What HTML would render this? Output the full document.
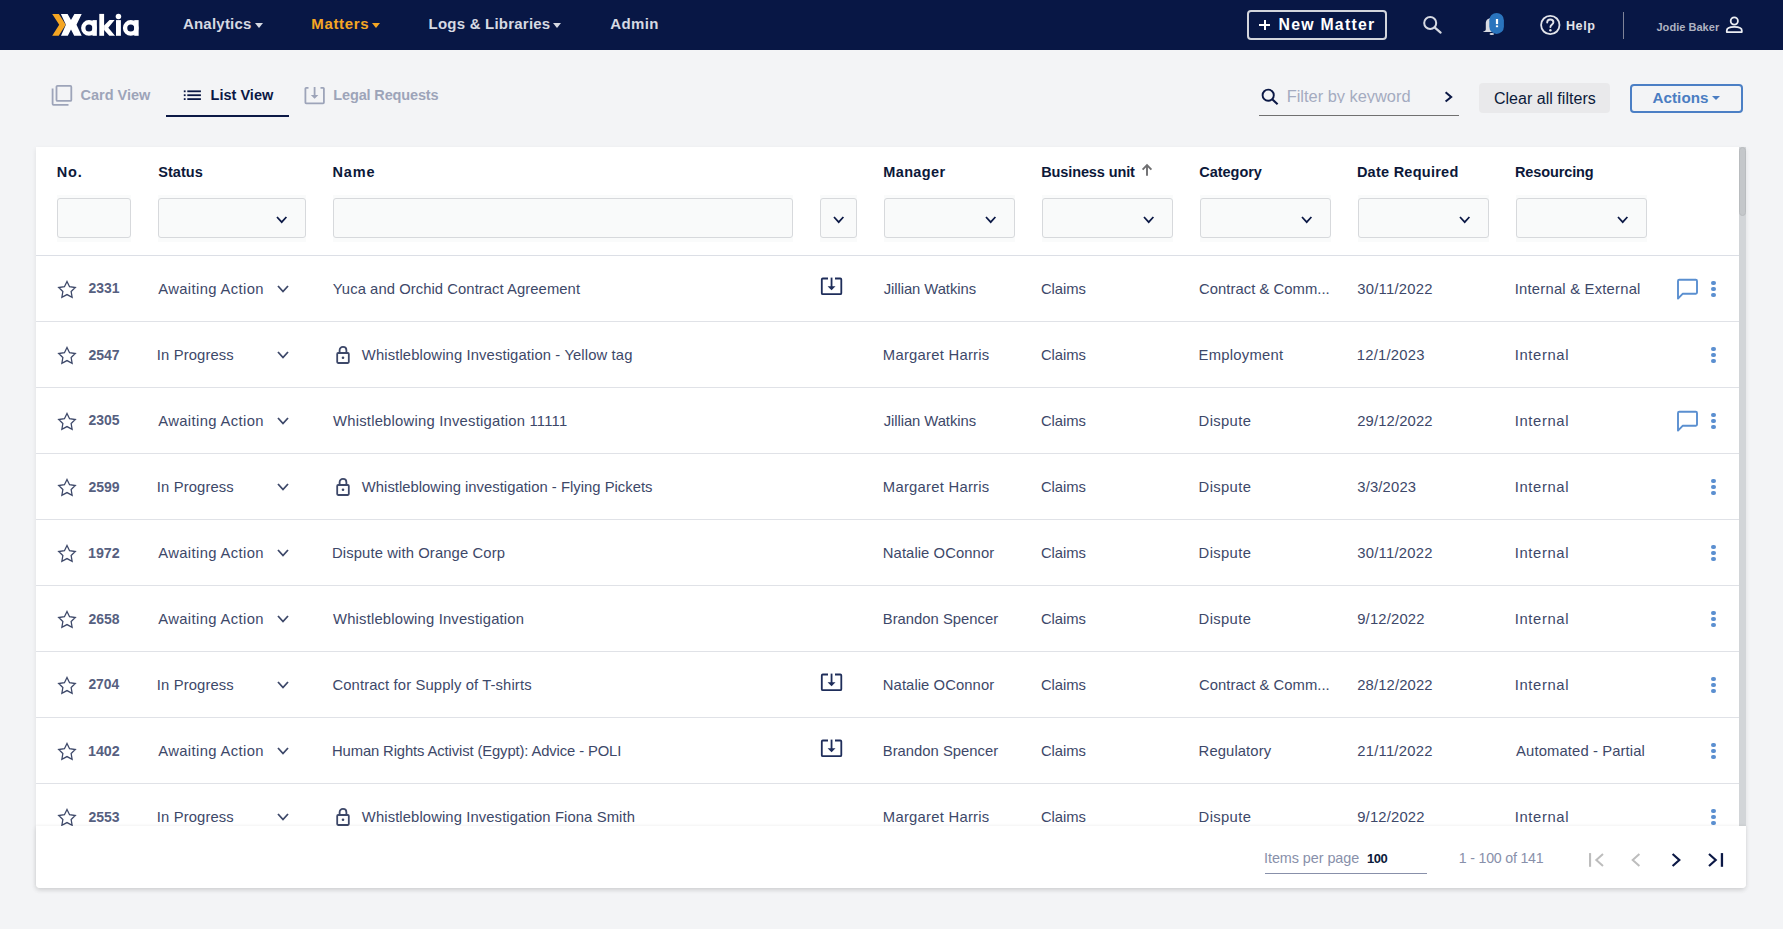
<!DOCTYPE html>
<html><head><meta charset="utf-8"><style>
*{margin:0;padding:0;box-sizing:content-box}
html,body{width:1783px;height:929px;overflow:hidden;background:#f3f4f6;font-family:"Liberation Sans",sans-serif}
body{position:relative}
.t{position:absolute;white-space:nowrap}
#nav{position:absolute;left:0;top:0;width:1783px;height:50px;background:#081745}
#card{position:absolute;left:36px;top:147px;width:1710px;height:741px;background:#fff;border-radius:0 0 4px 4px;box-shadow:0 2px 5px rgba(0,0,0,0.09)}
#rows{position:absolute;left:0;top:256px;width:1739px;height:570px;overflow:hidden}
#rows .t{}
.inp{position:absolute;border:1px solid #d7d9dc;border-radius:3px;background:#f9fafa}
#foot{position:absolute;left:36px;top:826px;width:1710px;height:62px;background:#fff;border-radius:0 0 4px 4px;box-shadow:0 -1px 3px rgba(0,0,0,0.04), -1px 2px 5px rgba(0,0,0,0.07)}
</style></head><body>
<div id="nav"></div>
<svg style="position:absolute;left:0;top:0" width="150" height="50" viewBox="0 0 150 50">
<polygon points="52.2,13.9 58.9,13.9 65.7,24.85 58.7,35.8 52.2,35.8 59.2,24.85" fill="#f5a623"/>
<polygon points="60.9,13.9 67.6,13.9 71,20.1 74.4,13.9 81.7,13.9 76.5,24.85 81.7,35.8 74.2,35.8 71,29.6 67.8,35.8 61,35.8 65.9,24.85" fill="#fff"/>
<path fill="#fff" fill-rule="evenodd" d="M88.95 20.1 A7.85 7.85 0 1 0 88.95 35.8 A7.85 7.85 0 1 0 88.95 20.1 Z M88.95 24.45 A3.5 3.5 0 1 1 88.95 31.45 A3.5 3.5 0 1 1 88.95 24.45 Z"/>
<rect x="92.4" y="20.1" width="4.45" height="15.7" fill="#fff"/>
<rect x="99.3" y="13.9" width="4.8" height="21.9" fill="#fff"/>
<polygon points="104.1,25.6 109.5,20.1 114.6,20.1 108.3,27.7 115,35.8 109.3,35.8 104.1,29.9" fill="#fff"/>
<rect x="116" y="20.1" width="4.9" height="15.7" fill="#fff"/>
<circle cx="118.45" cy="16.6" r="2.75" fill="#fff"/>
<path fill="#fff" fill-rule="evenodd" d="M130.75 20.1 A7.85 7.85 0 1 0 130.75 35.8 A7.85 7.85 0 1 0 130.75 20.1 Z M130.75 24.45 A3.5 3.5 0 1 1 130.75 31.45 A3.5 3.5 0 1 1 130.75 24.45 Z"/>
<rect x="134.2" y="20.1" width="4.45" height="15.7" fill="#fff"/>
</svg>
<div class="t" style="left:182.95000000000002px;top:16.20px;font-size:15px;line-height:15px;font-weight:700;color:#d6d9e2;letter-spacing:0.219px;">Analytics</div>
<div style="position:absolute;left:255.4px;top:23px;width:0;height:0;border-left:4.25px solid transparent;border-right:4.25px solid transparent;border-top:5px solid #d6d9e2"></div>
<div class="t" style="left:311.34999999999997px;top:16.20px;font-size:15px;line-height:15px;font-weight:700;color:#f5a623;letter-spacing:0.633px;">Matters</div>
<div style="position:absolute;left:372px;top:23px;width:0;height:0;border-left:4.25px solid transparent;border-right:4.25px solid transparent;border-top:5px solid #f5a623"></div>
<div class="t" style="left:428.55px;top:16.20px;font-size:15px;line-height:15px;font-weight:700;color:#d6d9e2;letter-spacing:0.22px;">Logs &amp; Libraries</div>
<div style="position:absolute;left:553.3px;top:23px;width:0;height:0;border-left:4.25px solid transparent;border-right:4.25px solid transparent;border-top:5px solid #d6d9e2"></div>
<div class="t" style="left:610.3499999999999px;top:16.20px;font-size:15px;line-height:15px;font-weight:700;color:#d6d9e2;letter-spacing:0.375px;">Admin</div>
<div style="position:absolute;left:1247px;top:10px;width:136px;height:26px;border:2px solid #d3d5dc;border-radius:4px"></div>
<div style="position:absolute;left:1259px;top:23.8px;width:11px;height:2px;background:#fff"></div>
<div style="position:absolute;left:1263.5px;top:19.5px;width:2px;height:10.5px;background:#fff"></div>
<div class="t" style="left:1278.594px;top:16.73px;font-size:15.8px;line-height:15.8px;font-weight:700;color:#ffffff;letter-spacing:1.25px;">New Matter</div>
<svg style="position:absolute;left:1420px;top:14px" width="24" height="22" viewBox="0 0 24 22">
<circle cx="10.2" cy="9" r="6" fill="none" stroke="#d6d9e2" stroke-width="2"/>
<line x1="14.6" y1="13.4" x2="20.6" y2="18.6" stroke="#d6d9e2" stroke-width="2.2" stroke-linecap="round"/></svg>
<svg style="position:absolute;left:1478px;top:10px" width="30" height="28" viewBox="0 0 30 28">
<path d="M13.5 7.9 C9.8 7.9 7.8 10.2 7.8 13.2 L7.8 19.2 C7.8 20.6 6.6 21.1 5.3 21.6 L5.3 22.1 L14 22.1 Z" fill="#d9dbe2"/>
<ellipse cx="13.8" cy="24.1" rx="2.3" ry="1" fill="#d9dbe2"/>
<rect x="11.3" y="2.9" width="14.6" height="21.1" rx="7.3" fill="#2a74bd"/>
<rect x="17.9" y="9" width="2.2" height="5.1" fill="#fff"/>
<rect x="17.9" y="15.4" width="2.2" height="1.8" fill="#fff"/>
</svg>
<svg style="position:absolute;left:1538px;top:13px" width="24" height="24" viewBox="0 0 24 24">
<circle cx="12.3" cy="12" r="9.2" fill="none" stroke="#e2e4ea" stroke-width="1.8"/>
<path d="M9.2 9.6 C9.2 7.6 10.6 6.5 12.3 6.5 C14 6.5 15.4 7.6 15.4 9.3 C15.4 11.4 12.5 11.5 12.4 14" fill="none" stroke="#e2e4ea" stroke-width="1.9" stroke-linecap="round"/>
<circle cx="12.4" cy="17.2" r="1.2" fill="#e2e4ea"/></svg>
<div class="t" style="left:1565.918px;top:19.53px;font-size:12.6px;line-height:12.6px;font-weight:700;color:#e2e4ea;letter-spacing:0.623px;">Help</div>
<div style="position:absolute;left:1623px;top:12px;width:1px;height:27px;background:#7e8398"></div>
<div class="t" style="left:1656.48px;top:21.89px;font-size:11px;line-height:11px;font-weight:700;color:#aeb2c0;letter-spacing:0.037px;">Jodie Baker</div>
<svg style="position:absolute;left:1724px;top:15px" width="20" height="20" viewBox="0 0 20 20">
<circle cx="10.3" cy="6" r="3.6" fill="none" stroke="#eceef3" stroke-width="1.8"/>
<path d="M2.8 17.1 L2.8 15.5 C2.8 13.2 5 11.9 10.3 11.9 C15.6 11.9 17.8 13.2 17.8 15.5 L17.8 17.1 Z" fill="none" stroke="#eceef3" stroke-width="1.8" stroke-linejoin="round"/></svg>
<svg style="position:absolute;left:50px;top:83px" width="26" height="24" viewBox="0 0 26 24">
<path d="M2.6 5.5 L2.6 20.9 Q2.6 21.8 3.5 21.8 L18.5 21.8" fill="none" stroke="#9da4b9" stroke-width="1.8"/>
<rect x="6.5" y="2.9" width="14.8" height="15" rx="1" fill="none" stroke="#9da4b9" stroke-width="1.8"/></svg>
<div class="t" style="left:80.62px;top:87.93px;font-size:14.5px;line-height:14.5px;font-weight:700;color:#9da4b9;letter-spacing:-0.014px;">Card View</div>
<svg style="position:absolute;left:182px;top:88px" width="22" height="14" viewBox="0 0 22 14">
<rect x="1.8" y="2.4" width="1.8" height="1.8" fill="#0b1845"/><rect x="5.3" y="2.4" width="13.6" height="1.8" fill="#0b1845"/>
<rect x="1.8" y="6.3" width="1.8" height="1.8" fill="#0b1845"/><rect x="5.3" y="6.3" width="13.6" height="1.8" fill="#0b1845"/>
<rect x="1.8" y="10.2" width="1.8" height="1.8" fill="#0b1845"/><rect x="5.3" y="10.2" width="13.6" height="1.8" fill="#0b1845"/></svg>
<div class="t" style="left:210.585px;top:87.93px;font-size:14.5px;line-height:14.5px;font-weight:700;color:#0b1845;letter-spacing:0.009px;">List View</div>
<div style="position:absolute;left:166px;top:114.5px;width:123px;height:2.6px;background:#0b1845"></div>
<svg style="position:absolute;left:303px;top:85px" width="24" height="21" viewBox="0 0 24 21">
<path d="M5.5 2.8 L3.2 2.8 Q2.4 2.8 2.4 3.6 L2.4 17.5 Q2.4 18.3 3.2 18.3 L20.1 18.3 Q20.9 18.3 20.9 17.5 L20.9 3.6 Q20.9 2.8 20.1 2.8 L17.5 2.8" fill="none" stroke="#9da4b9" stroke-width="1.8"/>
<line x1="11.6" y1="2" x2="11.6" y2="11" stroke="#9da4b9" stroke-width="1.8"/>
<polygon points="7.8,10 15.4,10 11.6,13.8" fill="#9da4b9"/></svg>
<div class="t" style="left:333.285px;top:87.93px;font-size:14.5px;line-height:14.5px;font-weight:700;color:#9da4b9;letter-spacing:-0.143px;">Legal Requests</div>
<svg style="position:absolute;left:1259px;top:86px" width="22" height="22" viewBox="0 0 22 22">
<circle cx="9.2" cy="9.2" r="5.6" fill="none" stroke="#0b1845" stroke-width="1.9"/>
<line x1="13.2" y1="13.2" x2="18.6" y2="18.3" stroke="#0b1845" stroke-width="2.1"/></svg>
<div style="position:absolute;left:1286px;top:84px;width:160px;height:18.6px;overflow:hidden"><div class="t" style="left:0.7px;top:3.72px;font-size:16.4px;line-height:16.4px;font-weight:400;color:#a4abc0;letter-spacing:0px;">Filter by keyword</div></div>
<svg style="position:absolute;left:1440px;top:88px" width="16" height="18" viewBox="0 0 16 18">
<polyline points="5.6,4.2 11.2,8.9 5.6,13.6" fill="none" stroke="#0b1845" stroke-width="2"/></svg>
<div style="position:absolute;left:1259px;top:114.6px;width:200px;height:1.6px;background:#707070"></div>
<div style="position:absolute;left:1479px;top:83px;width:131px;height:30px;background:#e9e9eb;border-radius:4px"></div>
<div class="t" style="left:1493.9px;top:91.36px;font-size:16px;line-height:16px;font-weight:400;color:#0c1a3a;letter-spacing:0.031px;">Clear all filters</div>
<div style="position:absolute;left:1630px;top:84px;width:109px;height:24.5px;border:2px solid #4b7fc5;border-radius:4px"></div>
<div class="t" style="left:1652.544px;top:90.13px;font-size:15.2px;line-height:15.2px;font-weight:700;color:#4a7dc2;letter-spacing:0.039px;">Actions</div>
<div style="position:absolute;left:1712.4px;top:95.5px;width:0;height:0;border-left:4.25px solid transparent;border-right:4.25px solid transparent;border-top:4.8px solid #4a7dc2"></div>
<div id="card"></div>
<div class="t" style="left:56.685px;top:165.23px;font-size:14.5px;line-height:14.5px;font-weight:700;color:#0c1839;letter-spacing:0.842px;">No.</div>
<div class="t" style="left:158.265px;top:165.23px;font-size:14.5px;line-height:14.5px;font-weight:700;color:#0c1839;letter-spacing:0.038px;">Status</div>
<div class="t" style="left:332.485px;top:165.23px;font-size:14.5px;line-height:14.5px;font-weight:700;color:#0c1839;letter-spacing:0.903px;">Name</div>
<div class="t" style="left:883.285px;top:165.23px;font-size:14.5px;line-height:14.5px;font-weight:700;color:#0c1839;letter-spacing:0.361px;">Manager</div>
<div class="t" style="left:1041.185px;top:165.23px;font-size:14.5px;line-height:14.5px;font-weight:700;color:#0c1839;letter-spacing:-0.11px;">Business unit</div>
<div class="t" style="left:1199.3200000000002px;top:165.23px;font-size:14.5px;line-height:14.5px;font-weight:700;color:#0c1839;letter-spacing:-0.044px;">Category</div>
<div class="t" style="left:1356.885px;top:165.23px;font-size:14.5px;line-height:14.5px;font-weight:700;color:#0c1839;letter-spacing:0.26px;">Date Required</div>
<div class="t" style="left:1514.885px;top:165.23px;font-size:14.5px;line-height:14.5px;font-weight:700;color:#0c1839;letter-spacing:-0.102px;">Resourcing</div>
<svg style="position:absolute;left:1140px;top:162px" width="14" height="16" viewBox="0 0 14 16">
<line x1="7" y1="3.6" x2="7" y2="13.8" stroke="#6e6e70" stroke-width="1.9"/>
<polyline points="2.6,7.6 7,3.2 11.4,7.6" fill="none" stroke="#6e6e70" stroke-width="1.9"/></svg>
<div style="position:absolute;left:56.7px;top:194.8px;width:74.6px;height:47.2px;background:#fafbfb"></div>
<div class="inp" style="left:57px;top:198px;width:72px;height:38px"></div>
<div style="position:absolute;left:157.7px;top:194.8px;width:148.6px;height:47.2px;background:#fafbfb"></div>
<div class="inp" style="left:158px;top:198px;width:146px;height:38px"></div>
<svg style="position:absolute;left:275.3px;top:215.3px" width="13.4" height="9.4" viewBox="0 0 13.4 9.4"><polyline points="2,2 6.7,7.1000000000000005 11.4,2" fill="none" stroke="#0b1845" stroke-width="1.75"/></svg>
<div style="position:absolute;left:332.7px;top:194.8px;width:460.6px;height:47.2px;background:#fafbfb"></div>
<div class="inp" style="left:333px;top:198px;width:458px;height:38px"></div>
<div style="position:absolute;left:819.7px;top:194.8px;width:37.6px;height:47.2px;background:#fafbfb"></div>
<div class="inp" style="left:820px;top:198px;width:35px;height:38px"></div>
<svg style="position:absolute;left:831.8px;top:215.3px" width="13.4" height="9.4" viewBox="0 0 13.4 9.4"><polyline points="2,2 6.7,7.1000000000000005 11.4,2" fill="none" stroke="#0b1845" stroke-width="1.75"/></svg>
<div style="position:absolute;left:883.7px;top:194.8px;width:131.6px;height:47.2px;background:#fafbfb"></div>
<div class="inp" style="left:884px;top:198px;width:129px;height:38px"></div>
<svg style="position:absolute;left:984.3px;top:215.3px" width="13.4" height="9.4" viewBox="0 0 13.4 9.4"><polyline points="2,2 6.7,7.1000000000000005 11.4,2" fill="none" stroke="#0b1845" stroke-width="1.75"/></svg>
<div style="position:absolute;left:1041.7px;top:194.8px;width:131.6px;height:47.2px;background:#fafbfb"></div>
<div class="inp" style="left:1042px;top:198px;width:129px;height:38px"></div>
<svg style="position:absolute;left:1142.3px;top:215.3px" width="13.4" height="9.4" viewBox="0 0 13.4 9.4"><polyline points="2,2 6.7,7.1000000000000005 11.4,2" fill="none" stroke="#0b1845" stroke-width="1.75"/></svg>
<div style="position:absolute;left:1199.7px;top:194.8px;width:131.6px;height:47.2px;background:#fafbfb"></div>
<div class="inp" style="left:1200px;top:198px;width:129px;height:38px"></div>
<svg style="position:absolute;left:1300.3px;top:215.3px" width="13.4" height="9.4" viewBox="0 0 13.4 9.4"><polyline points="2,2 6.7,7.1000000000000005 11.4,2" fill="none" stroke="#0b1845" stroke-width="1.75"/></svg>
<div style="position:absolute;left:1357.7px;top:194.8px;width:131.6px;height:47.2px;background:#fafbfb"></div>
<div class="inp" style="left:1358px;top:198px;width:129px;height:38px"></div>
<svg style="position:absolute;left:1458.3px;top:215.3px" width="13.4" height="9.4" viewBox="0 0 13.4 9.4"><polyline points="2,2 6.7,7.1000000000000005 11.4,2" fill="none" stroke="#0b1845" stroke-width="1.75"/></svg>
<div style="position:absolute;left:1515.7px;top:194.8px;width:131.6px;height:47.2px;background:#fafbfb"></div>
<div class="inp" style="left:1516px;top:198px;width:129px;height:38px"></div>
<svg style="position:absolute;left:1616.3px;top:215.3px" width="13.4" height="9.4" viewBox="0 0 13.4 9.4"><polyline points="2,2 6.7,7.1000000000000005 11.4,2" fill="none" stroke="#0b1845" stroke-width="1.75"/></svg>
<div style="position:absolute;left:36px;top:254.5px;width:1703px;height:1.4px;background:#dcdfe6"></div>
<div id="rows">
<svg style="position:absolute;left:55.7px;top:22.8px" width="22" height="22" viewBox="0 0 22 22">
<polygon points="11.00,2.50 13.56,7.68 19.27,8.51 15.14,12.54 16.11,18.24 11.00,15.55 5.89,18.24 6.86,12.54 2.73,8.51 8.44,7.68" fill="none" stroke="#3d4869" stroke-width="1.3" stroke-linejoin="miter"/></svg>
<div class="t" style="left:88.38110599078341px;top:26.38px;font-size:13.963px;line-height:13.963px;font-weight:700;color:#56607f;letter-spacing:0px;">2331</div>
<div class="t" style="left:158.2px;top:25.67px;font-size:14.8px;line-height:14.8px;font-weight:400;color:#3d4869;letter-spacing:0.381px;">Awaiting Action</div>
<svg style="position:absolute;left:275.5px;top:27.700000000000003px" width="14" height="9.8" viewBox="0 0 14 9.8"><polyline points="2,2 7.0,7.5 12,2" fill="none" stroke="#3d4869" stroke-width="1.8"/></svg>
<div class="t" style="left:332.756px;top:25.67px;font-size:14.8px;line-height:14.8px;font-weight:400;color:#3d4869;letter-spacing:0.065px;">Yuca and Orchid Contract Agreement</div>
<svg style="position:absolute;left:818px;top:19px" width="28" height="24" viewBox="0 0 28 24">
<path d="M10 3.5 L4.8 3.5 Q3.8 3.5 3.8 4.5 L3.8 18.2 Q3.8 19.2 4.8 19.2 L22.3 19.2 Q23.3 19.2 23.3 18.2 L23.3 4.5 Q23.3 3.5 22.3 3.5 L17 3.5" fill="none" stroke="#1e2d5a" stroke-width="1.8"/>
<line x1="13.55" y1="2.6" x2="13.55" y2="12" stroke="#1e2d5a" stroke-width="1.8"/>
<polygon points="9.6,11.2 17.5,11.2 13.55,15.2" fill="#1e2d5a"/></svg>
<div class="t" style="left:883.704px;top:25.67px;font-size:14.8px;line-height:14.8px;font-weight:400;color:#3d4869;letter-spacing:-0.061px;">Jillian Watkins</div>
<div class="t" style="left:1040.96px;top:25.67px;font-size:14.8px;line-height:14.8px;font-weight:400;color:#3d4869;letter-spacing:-0.051px;">Claims</div>
<div class="t" style="left:1199.06px;top:25.67px;font-size:14.8px;line-height:14.8px;font-weight:400;color:#3d4869;letter-spacing:0.043px;">Contract &amp; Comm...</div>
<div class="t" style="left:1357.308px;top:25.67px;font-size:14.8px;line-height:14.8px;font-weight:400;color:#3d4869;letter-spacing:0.241px;">30/11/2022</div>
<div class="t" style="left:1514.7679999999998px;top:25.67px;font-size:14.8px;line-height:14.8px;font-weight:400;color:#3d4869;letter-spacing:0.215px;">Internal &amp; External</div>
<svg style="position:absolute;left:1674px;top:21px" width="26" height="24" viewBox="0 0 26 24">
<path d="M4 21.6 L4 4 Q4 2.8 5.2 2.8 L21.8 2.8 Q23 2.8 23 4 L23 15.6 Q23 16.8 21.8 16.8 L8.6 16.8 Z" fill="none" stroke="#5a8fd0" stroke-width="1.9" stroke-linejoin="round"/></svg>
<div style="position:absolute;left:1711.0px;top:24.6px;width:4.8px;height:4.8px;border-radius:50%;background:#5b8fd0"></div>
<div style="position:absolute;left:1711.0px;top:30.65px;width:4.8px;height:4.8px;border-radius:50%;background:#5b8fd0"></div>
<div style="position:absolute;left:1711.0px;top:36.6px;width:4.8px;height:4.8px;border-radius:50%;background:#5b8fd0"></div>
<div style="position:absolute;left:36px;top:64.5px;width:1703px;height:1.3px;background:#e0e2e7"></div>
<svg style="position:absolute;left:55.7px;top:88.8px" width="22" height="22" viewBox="0 0 22 22">
<polygon points="11.00,2.50 13.56,7.68 19.27,8.51 15.14,12.54 16.11,18.24 11.00,15.55 5.89,18.24 6.86,12.54 2.73,8.51 8.44,7.68" fill="none" stroke="#3d4869" stroke-width="1.3" stroke-linejoin="miter"/></svg>
<div class="t" style="left:88.37720930232558px;top:92.27px;font-size:14.093px;line-height:14.093px;font-weight:700;color:#56607f;letter-spacing:0px;">2547</div>
<div class="t" style="left:156.868px;top:91.67px;font-size:14.8px;line-height:14.8px;font-weight:400;color:#3d4869;letter-spacing:0.125px;">In Progress</div>
<svg style="position:absolute;left:275.5px;top:93.69999999999999px" width="14" height="9.8" viewBox="0 0 14 9.8"><polyline points="2,2 7.0,7.5 12,2" fill="none" stroke="#3d4869" stroke-width="1.8"/></svg>
<svg style="position:absolute;left:334px;top:89.4px" width="18" height="20" viewBox="0 0 18 20">
<path d="M5.6 7.5 L5.6 5.2 C5.6 3.2 7 1.9 9 1.9 C11 1.9 12.4 3.2 12.4 5.2 L12.4 7.5" fill="none" stroke="#3d4869" stroke-width="1.8"/>
<rect x="3.2" y="8" width="11.6" height="10" rx="0.9" fill="none" stroke="#3d4869" stroke-width="1.8"/>
<circle cx="9" cy="12.8" r="1.3" fill="#3d4869"/></svg>
<div class="t" style="left:361.852px;top:91.67px;font-size:14.8px;line-height:14.8px;font-weight:400;color:#3d4869;letter-spacing:0.122px;">Whistleblowing Investigation - Yellow tag</div>
<div class="t" style="left:882.816px;top:91.67px;font-size:14.8px;line-height:14.8px;font-weight:400;color:#3d4869;letter-spacing:0.258px;">Margaret Harris</div>
<div class="t" style="left:1040.96px;top:91.67px;font-size:14.8px;line-height:14.8px;font-weight:400;color:#3d4869;letter-spacing:-0.051px;">Claims</div>
<div class="t" style="left:1198.616px;top:91.67px;font-size:14.8px;line-height:14.8px;font-weight:400;color:#3d4869;letter-spacing:0.26px;">Employment</div>
<div class="t" style="left:1356.7160000000001px;top:91.67px;font-size:14.8px;line-height:14.8px;font-weight:400;color:#3d4869;letter-spacing:0.245px;">12/1/2023</div>
<div class="t" style="left:1514.7679999999998px;top:91.67px;font-size:14.8px;line-height:14.8px;font-weight:400;color:#3d4869;letter-spacing:0.619px;">Internal</div>
<div style="position:absolute;left:1711.0px;top:90.6px;width:4.8px;height:4.8px;border-radius:50%;background:#5b8fd0"></div>
<div style="position:absolute;left:1711.0px;top:96.64999999999999px;width:4.8px;height:4.8px;border-radius:50%;background:#5b8fd0"></div>
<div style="position:absolute;left:1711.0px;top:102.6px;width:4.8px;height:4.8px;border-radius:50%;background:#5b8fd0"></div>
<div style="position:absolute;left:36px;top:130.5px;width:1703px;height:1.3px;background:#e0e2e7"></div>
<svg style="position:absolute;left:55.7px;top:154.8px" width="22" height="22" viewBox="0 0 22 22">
<polygon points="11.00,2.50 13.56,7.68 19.27,8.51 15.14,12.54 16.11,18.24 11.00,15.55 5.89,18.24 6.86,12.54 2.73,8.51 8.44,7.68" fill="none" stroke="#3d4869" stroke-width="1.3" stroke-linejoin="miter"/></svg>
<div class="t" style="left:88.38110599078341px;top:158.38px;font-size:13.963px;line-height:13.963px;font-weight:700;color:#56607f;letter-spacing:0px;">2305</div>
<div class="t" style="left:158.2px;top:157.67px;font-size:14.8px;line-height:14.8px;font-weight:400;color:#3d4869;letter-spacing:0.381px;">Awaiting Action</div>
<svg style="position:absolute;left:275.5px;top:159.7px" width="14" height="9.8" viewBox="0 0 14 9.8"><polyline points="2,2 7.0,7.5 12,2" fill="none" stroke="#3d4869" stroke-width="1.8"/></svg>
<div class="t" style="left:333.05199999999996px;top:157.67px;font-size:14.8px;line-height:14.8px;font-weight:400;color:#3d4869;letter-spacing:0.223px;">Whistleblowing Investigation 11111</div>
<div class="t" style="left:883.704px;top:157.67px;font-size:14.8px;line-height:14.8px;font-weight:400;color:#3d4869;letter-spacing:-0.061px;">Jillian Watkins</div>
<div class="t" style="left:1040.96px;top:157.67px;font-size:14.8px;line-height:14.8px;font-weight:400;color:#3d4869;letter-spacing:-0.051px;">Claims</div>
<div class="t" style="left:1198.616px;top:157.67px;font-size:14.8px;line-height:14.8px;font-weight:400;color:#3d4869;letter-spacing:0.351px;">Dispute</div>
<div class="t" style="left:1357.16px;top:157.67px;font-size:14.8px;line-height:14.8px;font-weight:400;color:#3d4869;letter-spacing:0.142px;">29/12/2022</div>
<div class="t" style="left:1514.7679999999998px;top:157.67px;font-size:14.8px;line-height:14.8px;font-weight:400;color:#3d4869;letter-spacing:0.619px;">Internal</div>
<svg style="position:absolute;left:1674px;top:153px" width="26" height="24" viewBox="0 0 26 24">
<path d="M4 21.6 L4 4 Q4 2.8 5.2 2.8 L21.8 2.8 Q23 2.8 23 4 L23 15.6 Q23 16.8 21.8 16.8 L8.6 16.8 Z" fill="none" stroke="#5a8fd0" stroke-width="1.9" stroke-linejoin="round"/></svg>
<div style="position:absolute;left:1711.0px;top:156.6px;width:4.8px;height:4.8px;border-radius:50%;background:#5b8fd0"></div>
<div style="position:absolute;left:1711.0px;top:162.65px;width:4.8px;height:4.8px;border-radius:50%;background:#5b8fd0"></div>
<div style="position:absolute;left:1711.0px;top:168.6px;width:4.8px;height:4.8px;border-radius:50%;background:#5b8fd0"></div>
<div style="position:absolute;left:36px;top:196.5px;width:1703px;height:1.3px;background:#e0e2e7"></div>
<svg style="position:absolute;left:55.7px;top:220.8px" width="22" height="22" viewBox="0 0 22 22">
<polygon points="11.00,2.50 13.56,7.68 19.27,8.51 15.14,12.54 16.11,18.24 11.00,15.55 5.89,18.24 6.86,12.54 2.73,8.51 8.44,7.68" fill="none" stroke="#3d4869" stroke-width="1.3" stroke-linejoin="miter"/></svg>
<div class="t" style="left:88.37916666666666px;top:224.33px;font-size:14.028px;line-height:14.028px;font-weight:700;color:#56607f;letter-spacing:0px;">2599</div>
<div class="t" style="left:156.868px;top:223.67px;font-size:14.8px;line-height:14.8px;font-weight:400;color:#3d4869;letter-spacing:0.125px;">In Progress</div>
<svg style="position:absolute;left:275.5px;top:225.7px" width="14" height="9.8" viewBox="0 0 14 9.8"><polyline points="2,2 7.0,7.5 12,2" fill="none" stroke="#3d4869" stroke-width="1.8"/></svg>
<svg style="position:absolute;left:334px;top:221.4px" width="18" height="20" viewBox="0 0 18 20">
<path d="M5.6 7.5 L5.6 5.2 C5.6 3.2 7 1.9 9 1.9 C11 1.9 12.4 3.2 12.4 5.2 L12.4 7.5" fill="none" stroke="#3d4869" stroke-width="1.8"/>
<rect x="3.2" y="8" width="11.6" height="10" rx="0.9" fill="none" stroke="#3d4869" stroke-width="1.8"/>
<circle cx="9" cy="12.8" r="1.3" fill="#3d4869"/></svg>
<div class="t" style="left:361.852px;top:223.67px;font-size:14.8px;line-height:14.8px;font-weight:400;color:#3d4869;letter-spacing:0.027px;">Whistleblowing investigation - Flying Pickets</div>
<div class="t" style="left:882.816px;top:223.67px;font-size:14.8px;line-height:14.8px;font-weight:400;color:#3d4869;letter-spacing:0.258px;">Margaret Harris</div>
<div class="t" style="left:1040.96px;top:223.67px;font-size:14.8px;line-height:14.8px;font-weight:400;color:#3d4869;letter-spacing:-0.051px;">Claims</div>
<div class="t" style="left:1198.616px;top:223.67px;font-size:14.8px;line-height:14.8px;font-weight:400;color:#3d4869;letter-spacing:0.351px;">Dispute</div>
<div class="t" style="left:1357.308px;top:223.67px;font-size:14.8px;line-height:14.8px;font-weight:400;color:#3d4869;letter-spacing:0.159px;">3/3/2023</div>
<div class="t" style="left:1514.7679999999998px;top:223.67px;font-size:14.8px;line-height:14.8px;font-weight:400;color:#3d4869;letter-spacing:0.619px;">Internal</div>
<div style="position:absolute;left:1711.0px;top:222.6px;width:4.8px;height:4.8px;border-radius:50%;background:#5b8fd0"></div>
<div style="position:absolute;left:1711.0px;top:228.65px;width:4.8px;height:4.8px;border-radius:50%;background:#5b8fd0"></div>
<div style="position:absolute;left:1711.0px;top:234.6px;width:4.8px;height:4.8px;border-radius:50%;background:#5b8fd0"></div>
<div style="position:absolute;left:36px;top:262.5px;width:1703px;height:1.3px;background:#e0e2e7"></div>
<svg style="position:absolute;left:55.7px;top:286.8px" width="22" height="22" viewBox="0 0 22 22">
<polygon points="11.00,2.50 13.56,7.68 19.27,8.51 15.14,12.54 16.11,18.24 11.00,15.55 5.89,18.24 6.86,12.54 2.73,8.51 8.44,7.68" fill="none" stroke="#3d4869" stroke-width="1.3" stroke-linejoin="miter"/></svg>
<div class="t" style="left:87.94245283018867px;top:290.10px;font-size:14.292px;line-height:14.292px;font-weight:700;color:#56607f;letter-spacing:0px;">1972</div>
<div class="t" style="left:158.2px;top:289.67px;font-size:14.8px;line-height:14.8px;font-weight:400;color:#3d4869;letter-spacing:0.381px;">Awaiting Action</div>
<svg style="position:absolute;left:275.5px;top:291.70000000000005px" width="14" height="9.8" viewBox="0 0 14 9.8"><polyline points="2,2 7.0,7.5 12,2" fill="none" stroke="#3d4869" stroke-width="1.8"/></svg>
<div class="t" style="left:332.01599999999996px;top:289.67px;font-size:14.8px;line-height:14.8px;font-weight:400;color:#3d4869;letter-spacing:0.116px;">Dispute with Orange Corp</div>
<div class="t" style="left:882.816px;top:289.67px;font-size:14.8px;line-height:14.8px;font-weight:400;color:#3d4869;letter-spacing:0.08px;">Natalie OConnor</div>
<div class="t" style="left:1040.96px;top:289.67px;font-size:14.8px;line-height:14.8px;font-weight:400;color:#3d4869;letter-spacing:-0.051px;">Claims</div>
<div class="t" style="left:1198.616px;top:289.67px;font-size:14.8px;line-height:14.8px;font-weight:400;color:#3d4869;letter-spacing:0.351px;">Dispute</div>
<div class="t" style="left:1357.308px;top:289.67px;font-size:14.8px;line-height:14.8px;font-weight:400;color:#3d4869;letter-spacing:0.241px;">30/11/2022</div>
<div class="t" style="left:1514.7679999999998px;top:289.67px;font-size:14.8px;line-height:14.8px;font-weight:400;color:#3d4869;letter-spacing:0.619px;">Internal</div>
<div style="position:absolute;left:1711.0px;top:288.6px;width:4.8px;height:4.8px;border-radius:50%;background:#5b8fd0"></div>
<div style="position:absolute;left:1711.0px;top:294.65000000000003px;width:4.8px;height:4.8px;border-radius:50%;background:#5b8fd0"></div>
<div style="position:absolute;left:1711.0px;top:300.6px;width:4.8px;height:4.8px;border-radius:50%;background:#5b8fd0"></div>
<div style="position:absolute;left:36px;top:328.5px;width:1703px;height:1.3px;background:#e0e2e7"></div>
<svg style="position:absolute;left:55.7px;top:352.8px" width="22" height="22" viewBox="0 0 22 22">
<polygon points="11.00,2.50 13.56,7.68 19.27,8.51 15.14,12.54 16.11,18.24 11.00,15.55 5.89,18.24 6.86,12.54 2.73,8.51 8.44,7.68" fill="none" stroke="#3d4869" stroke-width="1.3" stroke-linejoin="miter"/></svg>
<div class="t" style="left:88.37916666666666px;top:356.33px;font-size:14.028px;line-height:14.028px;font-weight:700;color:#56607f;letter-spacing:0px;">2658</div>
<div class="t" style="left:158.2px;top:355.67px;font-size:14.8px;line-height:14.8px;font-weight:400;color:#3d4869;letter-spacing:0.381px;">Awaiting Action</div>
<svg style="position:absolute;left:275.5px;top:357.70000000000005px" width="14" height="9.8" viewBox="0 0 14 9.8"><polyline points="2,2 7.0,7.5 12,2" fill="none" stroke="#3d4869" stroke-width="1.8"/></svg>
<div class="t" style="left:333.05199999999996px;top:355.67px;font-size:14.8px;line-height:14.8px;font-weight:400;color:#3d4869;letter-spacing:0.187px;">Whistleblowing Investigation</div>
<div class="t" style="left:882.816px;top:355.67px;font-size:14.8px;line-height:14.8px;font-weight:400;color:#3d4869;letter-spacing:0.006px;">Brandon Spencer</div>
<div class="t" style="left:1040.96px;top:355.67px;font-size:14.8px;line-height:14.8px;font-weight:400;color:#3d4869;letter-spacing:-0.051px;">Claims</div>
<div class="t" style="left:1198.616px;top:355.67px;font-size:14.8px;line-height:14.8px;font-weight:400;color:#3d4869;letter-spacing:0.351px;">Dispute</div>
<div class="t" style="left:1357.16px;top:355.67px;font-size:14.8px;line-height:14.8px;font-weight:400;color:#3d4869;letter-spacing:0.19px;">9/12/2022</div>
<div class="t" style="left:1514.7679999999998px;top:355.67px;font-size:14.8px;line-height:14.8px;font-weight:400;color:#3d4869;letter-spacing:0.619px;">Internal</div>
<div style="position:absolute;left:1711.0px;top:354.6px;width:4.8px;height:4.8px;border-radius:50%;background:#5b8fd0"></div>
<div style="position:absolute;left:1711.0px;top:360.65000000000003px;width:4.8px;height:4.8px;border-radius:50%;background:#5b8fd0"></div>
<div style="position:absolute;left:1711.0px;top:366.6px;width:4.8px;height:4.8px;border-radius:50%;background:#5b8fd0"></div>
<div style="position:absolute;left:36px;top:394.5px;width:1703px;height:1.3px;background:#e0e2e7"></div>
<svg style="position:absolute;left:55.7px;top:418.8px" width="22" height="22" viewBox="0 0 22 22">
<polygon points="11.00,2.50 13.56,7.68 19.27,8.51 15.14,12.54 16.11,18.24 11.00,15.55 5.89,18.24 6.86,12.54 2.73,8.51 8.44,7.68" fill="none" stroke="#3d4869" stroke-width="1.3" stroke-linejoin="miter"/></svg>
<div class="t" style="left:88.38493150684931px;top:422.49px;font-size:13.836px;line-height:13.836px;font-weight:700;color:#56607f;letter-spacing:0px;">2704</div>
<div class="t" style="left:156.868px;top:421.67px;font-size:14.8px;line-height:14.8px;font-weight:400;color:#3d4869;letter-spacing:0.125px;">In Progress</div>
<svg style="position:absolute;left:275.5px;top:423.70000000000005px" width="14" height="9.8" viewBox="0 0 14 9.8"><polyline points="2,2 7.0,7.5 12,2" fill="none" stroke="#3d4869" stroke-width="1.8"/></svg>
<div class="t" style="left:332.46px;top:421.67px;font-size:14.8px;line-height:14.8px;font-weight:400;color:#3d4869;letter-spacing:0.121px;">Contract for Supply of T-shirts</div>
<svg style="position:absolute;left:818px;top:415px" width="28" height="24" viewBox="0 0 28 24">
<path d="M10 3.5 L4.8 3.5 Q3.8 3.5 3.8 4.5 L3.8 18.2 Q3.8 19.2 4.8 19.2 L22.3 19.2 Q23.3 19.2 23.3 18.2 L23.3 4.5 Q23.3 3.5 22.3 3.5 L17 3.5" fill="none" stroke="#1e2d5a" stroke-width="1.8"/>
<line x1="13.55" y1="2.6" x2="13.55" y2="12" stroke="#1e2d5a" stroke-width="1.8"/>
<polygon points="9.6,11.2 17.5,11.2 13.55,15.2" fill="#1e2d5a"/></svg>
<div class="t" style="left:882.816px;top:421.67px;font-size:14.8px;line-height:14.8px;font-weight:400;color:#3d4869;letter-spacing:0.08px;">Natalie OConnor</div>
<div class="t" style="left:1040.96px;top:421.67px;font-size:14.8px;line-height:14.8px;font-weight:400;color:#3d4869;letter-spacing:-0.051px;">Claims</div>
<div class="t" style="left:1199.06px;top:421.67px;font-size:14.8px;line-height:14.8px;font-weight:400;color:#3d4869;letter-spacing:0.043px;">Contract &amp; Comm...</div>
<div class="t" style="left:1357.16px;top:421.67px;font-size:14.8px;line-height:14.8px;font-weight:400;color:#3d4869;letter-spacing:0.142px;">28/12/2022</div>
<div class="t" style="left:1514.7679999999998px;top:421.67px;font-size:14.8px;line-height:14.8px;font-weight:400;color:#3d4869;letter-spacing:0.619px;">Internal</div>
<div style="position:absolute;left:1711.0px;top:420.6px;width:4.8px;height:4.8px;border-radius:50%;background:#5b8fd0"></div>
<div style="position:absolute;left:1711.0px;top:426.65000000000003px;width:4.8px;height:4.8px;border-radius:50%;background:#5b8fd0"></div>
<div style="position:absolute;left:1711.0px;top:432.6px;width:4.8px;height:4.8px;border-radius:50%;background:#5b8fd0"></div>
<div style="position:absolute;left:36px;top:460.5px;width:1703px;height:1.3px;background:#e0e2e7"></div>
<svg style="position:absolute;left:55.7px;top:484.8px" width="22" height="22" viewBox="0 0 22 22">
<polygon points="11.00,2.50 13.56,7.68 19.27,8.51 15.14,12.54 16.11,18.24 11.00,15.55 5.89,18.24 6.86,12.54 2.73,8.51 8.44,7.68" fill="none" stroke="#3d4869" stroke-width="1.3" stroke-linejoin="miter"/></svg>
<div class="t" style="left:87.94245283018867px;top:488.10px;font-size:14.292px;line-height:14.292px;font-weight:700;color:#56607f;letter-spacing:0px;">1402</div>
<div class="t" style="left:158.2px;top:487.67px;font-size:14.8px;line-height:14.8px;font-weight:400;color:#3d4869;letter-spacing:0.381px;">Awaiting Action</div>
<svg style="position:absolute;left:275.5px;top:489.70000000000005px" width="14" height="9.8" viewBox="0 0 14 9.8"><polyline points="2,2 7.0,7.5 12,2" fill="none" stroke="#3d4869" stroke-width="1.8"/></svg>
<div class="t" style="left:332.01599999999996px;top:487.67px;font-size:14.8px;line-height:14.8px;font-weight:400;color:#3d4869;letter-spacing:-0.118px;">Human Rights Activist (Egypt): Advice - POLI</div>
<svg style="position:absolute;left:818px;top:481px" width="28" height="24" viewBox="0 0 28 24">
<path d="M10 3.5 L4.8 3.5 Q3.8 3.5 3.8 4.5 L3.8 18.2 Q3.8 19.2 4.8 19.2 L22.3 19.2 Q23.3 19.2 23.3 18.2 L23.3 4.5 Q23.3 3.5 22.3 3.5 L17 3.5" fill="none" stroke="#1e2d5a" stroke-width="1.8"/>
<line x1="13.55" y1="2.6" x2="13.55" y2="12" stroke="#1e2d5a" stroke-width="1.8"/>
<polygon points="9.6,11.2 17.5,11.2 13.55,15.2" fill="#1e2d5a"/></svg>
<div class="t" style="left:882.816px;top:487.67px;font-size:14.8px;line-height:14.8px;font-weight:400;color:#3d4869;letter-spacing:0.006px;">Brandon Spencer</div>
<div class="t" style="left:1040.96px;top:487.67px;font-size:14.8px;line-height:14.8px;font-weight:400;color:#3d4869;letter-spacing:-0.051px;">Claims</div>
<div class="t" style="left:1198.616px;top:487.67px;font-size:14.8px;line-height:14.8px;font-weight:400;color:#3d4869;letter-spacing:0.1px;">Regulatory</div>
<div class="t" style="left:1357.16px;top:487.67px;font-size:14.8px;line-height:14.8px;font-weight:400;color:#3d4869;letter-spacing:0.257px;">21/11/2022</div>
<div class="t" style="left:1516.1px;top:487.67px;font-size:14.8px;line-height:14.8px;font-weight:400;color:#3d4869;letter-spacing:0.119px;">Automated - Partial</div>
<div style="position:absolute;left:1711.0px;top:486.6px;width:4.8px;height:4.8px;border-radius:50%;background:#5b8fd0"></div>
<div style="position:absolute;left:1711.0px;top:492.65000000000003px;width:4.8px;height:4.8px;border-radius:50%;background:#5b8fd0"></div>
<div style="position:absolute;left:1711.0px;top:498.6px;width:4.8px;height:4.8px;border-radius:50%;background:#5b8fd0"></div>
<div style="position:absolute;left:36px;top:526.5px;width:1703px;height:1.3px;background:#e0e2e7"></div>
<svg style="position:absolute;left:55.7px;top:550.8px" width="22" height="22" viewBox="0 0 22 22">
<polygon points="11.00,2.50 13.56,7.68 19.27,8.51 15.14,12.54 16.11,18.24 11.00,15.55 5.89,18.24 6.86,12.54 2.73,8.51 8.44,7.68" fill="none" stroke="#3d4869" stroke-width="1.3" stroke-linejoin="miter"/></svg>
<div class="t" style="left:88.37916666666666px;top:554.33px;font-size:14.028px;line-height:14.028px;font-weight:700;color:#56607f;letter-spacing:0px;">2553</div>
<div class="t" style="left:156.868px;top:553.67px;font-size:14.8px;line-height:14.8px;font-weight:400;color:#3d4869;letter-spacing:0.125px;">In Progress</div>
<svg style="position:absolute;left:275.5px;top:555.7px" width="14" height="9.8" viewBox="0 0 14 9.8"><polyline points="2,2 7.0,7.5 12,2" fill="none" stroke="#3d4869" stroke-width="1.8"/></svg>
<svg style="position:absolute;left:334px;top:551.4px" width="18" height="20" viewBox="0 0 18 20">
<path d="M5.6 7.5 L5.6 5.2 C5.6 3.2 7 1.9 9 1.9 C11 1.9 12.4 3.2 12.4 5.2 L12.4 7.5" fill="none" stroke="#3d4869" stroke-width="1.8"/>
<rect x="3.2" y="8" width="11.6" height="10" rx="0.9" fill="none" stroke="#3d4869" stroke-width="1.8"/>
<circle cx="9" cy="12.8" r="1.3" fill="#3d4869"/></svg>
<div class="t" style="left:361.852px;top:553.67px;font-size:14.8px;line-height:14.8px;font-weight:400;color:#3d4869;letter-spacing:0.106px;">Whistleblowing Investigation Fiona Smith</div>
<div class="t" style="left:882.816px;top:553.67px;font-size:14.8px;line-height:14.8px;font-weight:400;color:#3d4869;letter-spacing:0.258px;">Margaret Harris</div>
<div class="t" style="left:1040.96px;top:553.67px;font-size:14.8px;line-height:14.8px;font-weight:400;color:#3d4869;letter-spacing:-0.051px;">Claims</div>
<div class="t" style="left:1198.616px;top:553.67px;font-size:14.8px;line-height:14.8px;font-weight:400;color:#3d4869;letter-spacing:0.351px;">Dispute</div>
<div class="t" style="left:1357.16px;top:553.67px;font-size:14.8px;line-height:14.8px;font-weight:400;color:#3d4869;letter-spacing:0.19px;">9/12/2022</div>
<div class="t" style="left:1514.7679999999998px;top:553.67px;font-size:14.8px;line-height:14.8px;font-weight:400;color:#3d4869;letter-spacing:0.619px;">Internal</div>
<div style="position:absolute;left:1711.0px;top:552.6px;width:4.8px;height:4.8px;border-radius:50%;background:#5b8fd0"></div>
<div style="position:absolute;left:1711.0px;top:558.65px;width:4.8px;height:4.8px;border-radius:50%;background:#5b8fd0"></div>
<div style="position:absolute;left:1711.0px;top:564.6px;width:4.8px;height:4.8px;border-radius:50%;background:#5b8fd0"></div>
</div>
<div style="position:absolute;left:1739px;top:147px;width:7px;height:679px;background:#d2d5d8"></div>
<div style="position:absolute;left:1739px;top:147px;width:5px;height:66.5px;background:#c4c7ca;border:1px solid #b9bcbf;border-radius:3.5px"></div>
<div id="foot"></div>
<div class="t" style="left:1264.004px;top:850.61px;font-size:14.4px;line-height:14.4px;font-weight:400;color:#8890aa;letter-spacing:-0.06px;">Items per page</div>
<div class="t" style="left:1366.92px;top:851.80px;font-size:13px;line-height:13px;font-weight:700;color:#0c1a3a;letter-spacing:-0.405px;">100</div>
<div style="position:absolute;left:1265px;top:872.6px;width:162px;height:1.1px;background:#8890aa"></div>
<div class="t" style="left:1458.864px;top:850.78px;font-size:14.2px;line-height:14.2px;font-weight:400;color:#8890aa;letter-spacing:-0.213px;">1 - 100 of 141</div>
<svg style="position:absolute;left:1580px;top:846px" width="150" height="28" viewBox="0 0 150 28">
<rect x="9" y="7.1" width="2.1" height="13.7" fill="#bdbdbd"/>
<polyline points="23,8 16.3,14 23,20" fill="none" stroke="#bdbdbd" stroke-width="2"/>
<polyline points="59.4,8 52.7,14 59.4,20" fill="none" stroke="#bdbdbd" stroke-width="2"/>
<polyline points="92.6,8 99.3,14 92.6,20" fill="none" stroke="#0b1845" stroke-width="2.2"/>
<polyline points="129,8 135.7,14 129,20" fill="none" stroke="#0b1845" stroke-width="2.2"/>
<rect x="140.8" y="7.1" width="2.3" height="13.7" fill="#0b1845"/>
</svg>
</body></html>
